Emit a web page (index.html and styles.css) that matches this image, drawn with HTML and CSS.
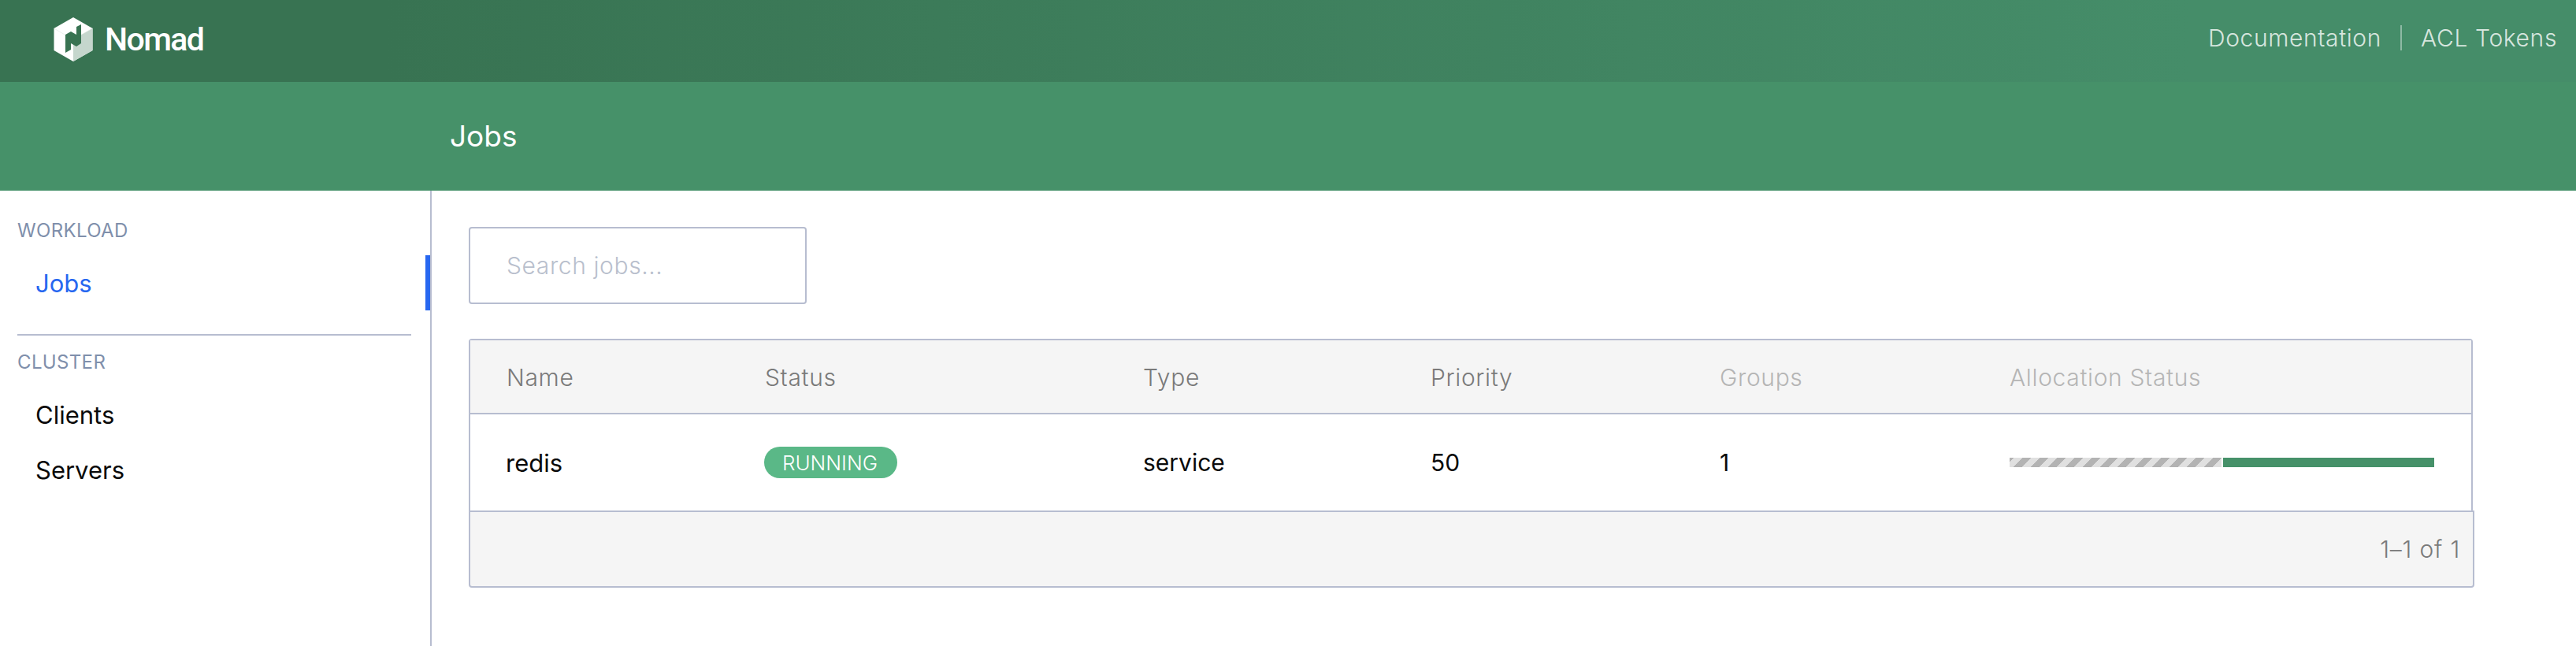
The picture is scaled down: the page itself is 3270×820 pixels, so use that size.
FILE: index.html
```html
<!DOCTYPE html>
<html lang="en">
<head>
<meta charset="utf-8">
<title>Jobs - Nomad</title>
<link rel="stylesheet" href="styles.css">
</head>
<body>
<header class="topbar">
  <a class="brand">
    <svg class="brand-mark" viewBox="0 0 50 56" aria-hidden="true">
      <path class="hex" d="M25 0 49.500 14V42L25 56 .5 42V14Z"/>
      <path class="face" d="M25 28 49.500 14V42L25 56Z"/>
      <path class="seam" d="M.5 14 15 22.500M25 28 49.500 14"/>
      <path class="letter" d="M15 22 22 18 29 22V12L35 9V33L29 37 22 33V41L15 45Z"/>
    </svg>
    <span class="brand-name">Nomad</span>
  </a>
  <nav class="toplinks">
    <a class="toplink">Documentation</a>
    <span class="toplink-sep"></span>
    <a class="toplink">ACL Tokens</a>
  </nav>
</header>
<div class="subbar"><h1 class="title">Jobs</h1></div>
<div class="layout">
  <aside class="sidebar">
    <p class="menu-label">WORKLOAD</p>
    <a class="menu-item active">Jobs</a>
    <hr class="menu-rule">
    <p class="menu-label second">CLUSTER</p>
    <a class="menu-item first">Clients</a>
    <a class="menu-item">Servers</a>
  </aside>
  <main class="content">
    <input class="search" type="text" placeholder="Search jobs...">
    <section class="panel">
      <div class="table">
        <div class="row head">
          <span class="cell">Name</span>
          <span class="cell">Status</span>
          <span class="cell">Type</span>
          <span class="cell">Priority</span>
          <span class="cell muted">Groups</span>
          <span class="cell muted">Allocation Status</span>
        </div>
        <div class="row body">
          <span class="cell name">redis</span>
          <span class="cell"><span class="badge">RUNNING</span></span>
          <span class="cell">service</span>
          <span class="cell">50</span>
          <span class="cell">1</span>
          <span class="cell">
            <span class="alloc">
              <span class="alloc-part stripes"></span>
              <span class="alloc-part solid"></span>
            </span>
          </span>
        </div>
      </div>
      <div class="pager">1–1 of 1</div>
    </section>
  </main>
</div>
</body>
</html>
```
FILE: styles.css
```css
* { box-sizing: border-box; }
html, body { margin: 0; height: 100%; }
body {
  font-family: Inter, "Liberation Sans", sans-serif;
  color: #0a0a0a;
  background: #fff;
  display: flex;
  flex-direction: column;
  overflow: hidden;
}
.topbar {
  height: 104px;
  flex: none;
  display: flex;
  align-items: center;
  justify-content: space-between;
  padding: 0 24px 0 68px;
  background: linear-gradient(90deg, #387352 0%, #387352 15%, #458d69 85%, #458d69 100%);
}
.brand { display: flex; align-items: center; gap: 15px; }
.brand-mark { width: 50px; height: 56px; display: block; margin-top: -4px; }
.hex { fill: #fff; }
.face { fill: #c5d6cd; }
.seam { fill: none; stroke: #d9e2dd; stroke-width: .5; }
.letter { fill: #387352; }
.brand-name {
  font-family: Roboto, sans-serif;
  font-weight: 500;
  font-size: 41px;
  line-height: 1;
  color: #fff;
  letter-spacing: -1.600px;
  margin-top: -4px;
}
.toplinks { display: flex; align-items: center; margin-top: -8px; }
.toplink { font-size: 30px; font-weight: 300; letter-spacing: .62px; color: rgba(255,255,255,.8); line-height: 36px; }
.toplink-sep { width: 2px; height: 32px; margin: 0 24px; background: rgba(255,255,255,.4); }
.subbar {
  height: 138px;
  flex: none;
  background: #469169;
  display: flex;
  align-items: center;
  padding-left: 571px;
}
.title { margin: 0; font-size: 37px; font-weight: 400; color: #fff; line-height: 46px; }
.layout { flex: 1; display: flex; min-height: 0; }
.sidebar {
  width: 548px;
  flex: none;
  border-right: 2px solid #b7bdd0;
  padding: 33px 0 0 22px;
}
.menu-label {
  margin: 0 0 13px;
  font-size: 24px;
  line-height: 36px;
  letter-spacing: .35px;
  font-weight: 400;
  color: #7f8fab;
}
.menu-label.second { margin-top: 16px; margin-bottom: 13px; }
.menu-item {
  display: flex;
  align-items: center;
  height: 70px;
  padding-left: 23px;
  font-size: 31px;
  color: #0a0a0a;
}
.menu-item.active {
  color: #2767f0;
  border-right: 6px solid #2767f0;
}
.menu-rule {
  margin: 30px 24px 0 0;
  height: 2px;
  border: 0;
  background: #b7bdd0;
}
.content { flex: 1; padding: 46px 0 0 47px; min-width: 0; }
.search {
  display: block;
  width: 429px;
  height: 98px;
  border: 2px solid #b7bdd0;
  border-radius: 4px;
  padding: 0 46px;
  font: 300 30px Inter, sans-serif;
  letter-spacing: .6px;
  outline: 0;
}
.search::placeholder { color: #b9bfcd; opacity: 1; }
.panel { width: 2546px; margin-top: 44px; }
.table {
  width: 2544px;
  border: 2px solid #b7bdd0;
  border-bottom: 0;
  border-radius: 4px 4px 0 0;
}
.row {
  display: grid;
  grid-template-columns: 328px 480px 365px 367px 368px 632px;
  align-items: center;
}
.row.head {
  height: 94px;
  padding-top: 2px;
  background: #f5f5f5;
  color: #7a7a7a;
  font-size: 30px;
  letter-spacing: .65px;
  font-weight: 300;
  border-bottom: 2px solid #b7bdd0;
}
.row.body { height: 122px; font-size: 30px; }
.cell { padding-left: 46px; display: block; }
.muted { color: #b5b5b5; }
.name { font-weight: 400; font-size: 31px; padding-left: 45px; }
.badge {
  display: inline-flex;
  align-items: center;
  height: 40px;
  margin-left: -1px;
  padding: 0 25px 0 23px;
  border-radius: 20px;
  background: #5ab887;
  color: #fff;
  font-size: 26px;
  font-weight: 300;
}
.alloc { display: flex; gap: 2px; width: 539px; height: 12px; }
.alloc-part { flex: 1; height: 100%; }
.stripes {
  background: repeating-linear-gradient(-45deg, #e0e0e0 0 7.800px, #b3b3b3 7.800px 15.560px);
}
.solid { background: #469169; }
.pager {
  height: 98px;
  border: 2px solid #b7bdd0;
  border-radius: 0 0 4px 4px;
  background: #f5f5f5;
  color: #7a7a7a;
  font-size: 30px;
  font-weight: 300;
  letter-spacing: .8px;
  display: flex;
  align-items: center;
  justify-content: flex-end;
  padding-right: 16px;
}
```
